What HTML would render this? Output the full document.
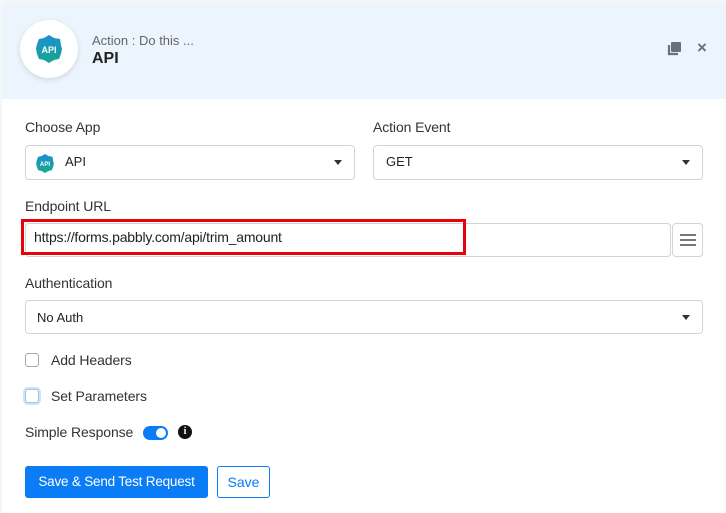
<!DOCTYPE html>
<html><head><meta charset="utf-8"><style>
*{box-sizing:border-box;margin:0;padding:0}
body{width:726px;height:500px;overflow:hidden;background:#f4f6f8;font-family:"Liberation Sans",sans-serif;color:#333;position:relative}
.card{position:absolute;left:2px;top:3px;width:730px;height:510px;background:#fff}
.hdr{position:absolute;left:0;top:0;right:0;height:96px;background:#ecf5fe}
.abs{position:absolute}
.lbl{position:absolute;font-size:14px;color:#333;letter-spacing:-0.1px}
.box{position:absolute;border:1px solid #d0d4d9;border-radius:4px;background:#fff;font-size:13px;color:#222}
.caret{position:absolute;right:12px;top:14px;width:0;height:0;border-left:4px solid transparent;border-right:4px solid transparent;border-top:5px solid #333}
.cb{position:absolute;width:14px;height:14px;border:1px solid #aaa;border-radius:3px;background:#fff}
</style></head><body>
<div class="card"></div>
<div class="hdr abs" style="left:2px;top:3px;width:724px"></div>
<div class="abs" style="left:20px;top:20px;width:58px;height:58px;border-radius:50%;background:#fff;box-shadow:0 2px 6px rgba(0,0,0,.12)"></div>
<svg class="abs" style="left:36px;top:35px" width="26" height="28" viewBox="0 0 26 28"><defs><linearGradient id="g" x1="0" y1="0" x2="0" y2="1"><stop offset="0" stop-color="#1a8fd6"/><stop offset="1" stop-color="#17a88a"/></linearGradient></defs><polygon points="13,0 18,3 24,4 25,10 26,14 25,19 23,24 18,25 13,28 8,25 3,24 1,19 0,14 1,9 3,4 8,3" fill="url(#g)"/><text x="13" y="18" font-size="9" font-weight="bold" fill="#fff" text-anchor="middle" font-family="Liberation Sans">API</text></svg>
<div class="abs" style="left:92px;top:33px;font-size:13px;color:#666">Action : Do this ...</div>
<div class="abs" style="left:92px;top:50px;font-size:16px;font-weight:bold;color:#222">API</div>
<svg class="abs" style="left:667px;top:41px" width="15" height="15" viewBox="0 0 15 15"><rect x="4" y="1" width="10" height="10" rx="1" fill="#6b7078"/><path d="M2 4v9h9" stroke="#6b7078" stroke-width="2.2" fill="none"/></svg>
<div class="abs" style="left:697px;top:38px;font-size:17px;font-weight:bold;color:#6b7078">×</div>

<div class="lbl" style="left:25px;top:119px">Choose App</div>
<div class="box" style="left:25px;top:145px;width:330px;height:35px">
<svg class="abs" style="left:10px;top:8px" width="18" height="19" viewBox="0 0 26 28"><polygon points="13,0 18,3 24,4 25,10 26,14 25,19 23,24 18,25 13,28 8,25 3,24 1,19 0,14 1,9 3,4 8,3" fill="url(#g)"/><text x="13" y="18" font-size="9" font-weight="bold" fill="#fff" text-anchor="middle" font-family="Liberation Sans">API</text></svg>
<span class="abs" style="left:39px;top:8px">API</span><div class="caret"></div></div>
<div class="lbl" style="left:373px;top:119px">Action Event</div>
<div class="box" style="left:373px;top:145px;width:330px;height:35px"><span class="abs" style="left:12px;top:8px">GET</span><div class="caret"></div></div>

<div class="lbl" style="left:25px;top:198px">Endpoint URL</div>
<div class="box" style="left:25px;top:223px;width:646px;height:34px"></div>
<div class="abs" style="left:21px;top:219px;width:445px;height:36px;border:3px solid #e8000b"></div>
<div class="abs" style="left:34px;top:229px;font-size:14px;color:#222;letter-spacing:-0.2px">https://forms.pabbly.com/api/trim_amount</div>
<div class="box" style="left:672px;top:223px;width:31px;height:34px"><div class="abs" style="left:7px;top:10px;width:16px;height:12px;border-top:2px solid #777;border-bottom:2px solid #777"></div><div class="abs" style="left:7px;top:15px;width:16px;height:2px;background:#777"></div></div>

<div class="lbl" style="left:25px;top:275px">Authentication</div>
<div class="box" style="left:25px;top:300px;width:678px;height:34px"><span class="abs" style="left:11px;top:9px">No Auth</span><div class="caret"></div></div>

<div class="cb" style="left:25px;top:353px"></div>
<div class="lbl" style="left:51px;top:352px">Add Headers</div>
<div class="cb" style="left:25px;top:389px;border-color:#9ec3f0;box-shadow:0 0 0 2px #cfe3fb"></div>
<div class="lbl" style="left:51px;top:388px">Set Parameters</div>
<div class="lbl" style="left:25px;top:424px">Simple Response</div>
<div class="abs" style="left:143px;top:426px;width:25px;height:14px;border-radius:7px;background:#0a7cf5"><div class="abs" style="left:13px;top:2px;width:10px;height:10px;border-radius:50%;background:#fff"></div></div>
<div class="abs" style="left:178px;top:425px;width:14px;height:14px;border-radius:50%;background:#111;color:#fff;font-size:10px;font-weight:bold;text-align:center;line-height:14px;font-family:'Liberation Serif',serif">i</div>

<div class="abs" style="left:25px;top:466px;width:183px;height:32px;background:#0a7cf5;border-radius:3px;color:#fff;font-size:13.5px;text-align:center;line-height:32px;letter-spacing:-0.2px">Save &amp; Send Test Request</div>
<div class="abs" style="left:217px;top:466px;width:53px;height:32px;border:1px solid #0a7cf5;border-radius:3px;color:#0a7cf5;font-size:14px;text-align:center;line-height:30px">Save</div>
</body></html>
